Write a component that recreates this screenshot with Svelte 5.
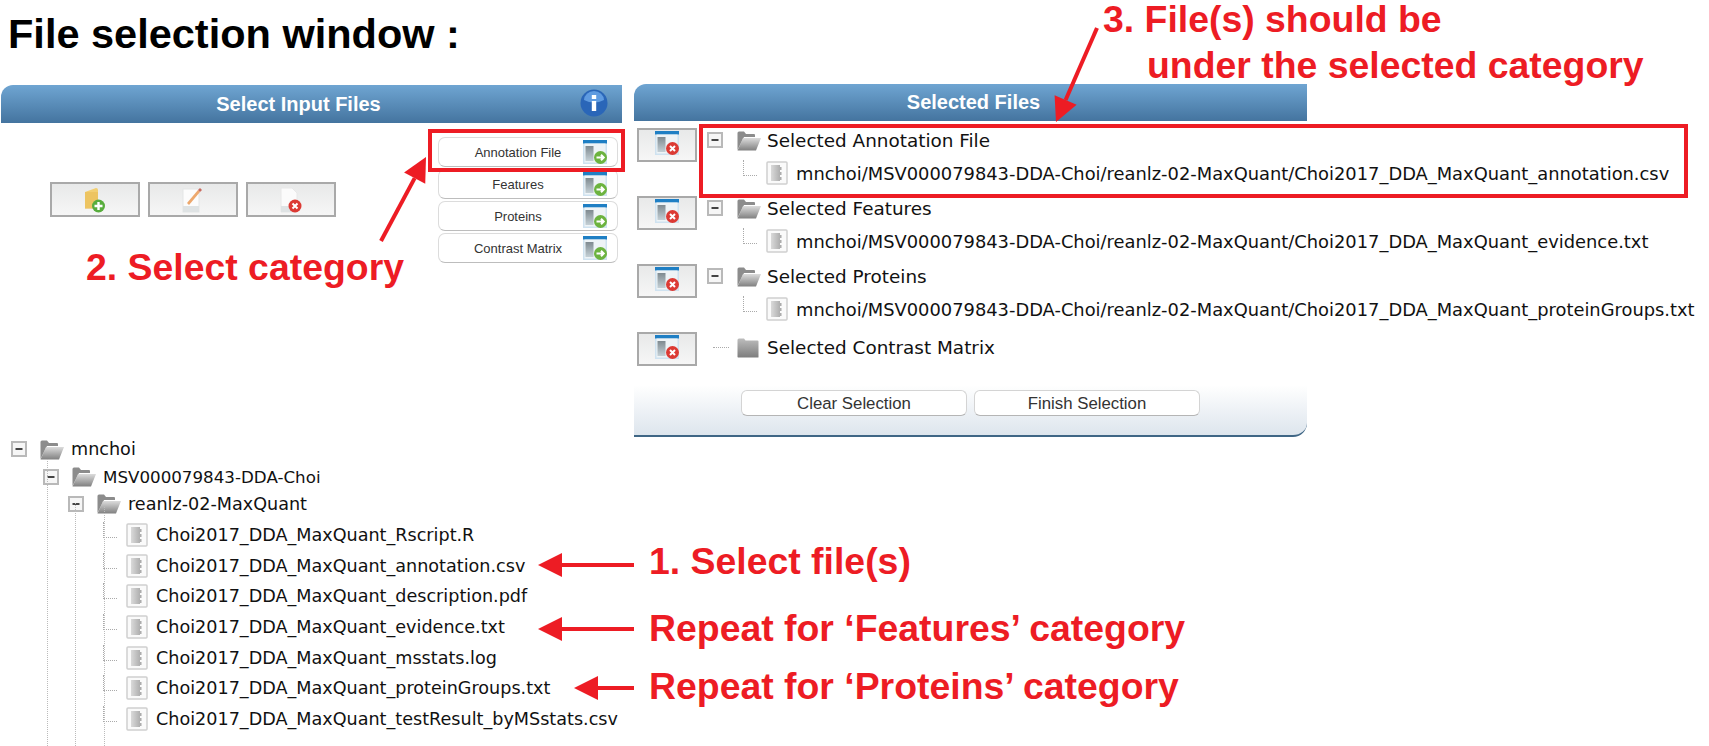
<script lang="ts">
  const categories = ['Annotation File', 'Features', 'Proteins', 'Contrast Matrix'];

  const base = 'mnchoi/MSV000079843-DDA-Choi/reanlz-02-MaxQuant/';
  const selected = [
    { label: 'Selected Annotation File', file: base + 'Choi2017_DDA_MaxQuant_annotation.csv' },
    { label: 'Selected Features', file: base + 'Choi2017_DDA_MaxQuant_evidence.txt' },
    { label: 'Selected Proteins', file: base + 'Choi2017_DDA_MaxQuant_proteinGroups.txt' },
    { label: 'Selected Contrast Matrix', file: null }
  ];

  const files = [
    'Choi2017_DDA_MaxQuant_Rscript.R',
    'Choi2017_DDA_MaxQuant_annotation.csv',
    'Choi2017_DDA_MaxQuant_description.pdf',
    'Choi2017_DDA_MaxQuant_evidence.txt',
    'Choi2017_DDA_MaxQuant_msstats.log',
    'Choi2017_DDA_MaxQuant_proteinGroups.txt',
    'Choi2017_DDA_MaxQuant_testResult_byMSstats.csv'
  ];

  // annotation arrows: from (x1,y1) to the tip (x2,y2)
  const arrows = [
    [634, 565, 538, 565],
    [634, 629, 538, 629],
    [634, 688, 574, 688],
    [381, 241, 426, 157],
    [1097, 28, 1056, 122]
  ].map(([x1, y1, x2, y2]) => {
    const len = Math.hypot(x2 - x1, y2 - y1);
    const ux = (x2 - x1) / len;
    const uy = (y2 - y1) / len;
    const hl = 24;
    const hw = 12;
    const bx = x2 - ux * hl;
    const by = y2 - uy * hl;
    return {
      x1, y1,
      x2: bx, y2: by,
      head: `${x2},${y2} ${bx - uy * hw},${by + ux * hw} ${bx + uy * hw},${by - ux * hw}`
    };
  });
</script>

{#snippet minus()}
  <svg class="minus" width="16" height="16" viewBox="0 0 16 16">
    <rect x="1" y="1" width="14" height="14" fill="#f6f6f6" stroke="#b9b9b9" stroke-width="2" />
    <rect x="4.5" y="7" width="7" height="2" fill="#444" />
  </svg>
{/snippet}

{#snippet folderOpen()}
  <svg class="folder" width="24" height="21" viewBox="0 0 24 21">
    <path d="M0.5 20V3q0-1.500 1.500-1.500h5l2 2.500h8q1 0 1 1v2H7z" fill="#8c8c8c" />
    <path d="M6 8h18l-5 12.500H0.500z" fill="url(#gFolder)" />
  </svg>
{/snippet}

{#snippet folderClosed()}
  <svg class="folder" width="22" height="21" viewBox="0 0 22 21">
    <path d="M0.500 20V3q0-1.500 1.500-1.500h5l1.500 2h12q1 0 1 1V20q0 .5-.5.5H1z" fill="url(#gFolderC)" />
  </svg>
{/snippet}

{#snippet fileIcon()}
  <svg class="file" width="22" height="24" viewBox="0 0 22 24">
    <rect x="1" y="1" width="20" height="22" rx="1" fill="#fafafa" stroke="#cfcfcf" stroke-width="1.500" />
    <path d="M5 4h9v2h1.500v3H14v2h1.500v3H14v2h1.500v3H14v1H5z" fill="url(#gFile)" />
  </svg>
{/snippet}

{#snippet windowIcon(kind)}
  <svg class="win" width="24" height="24" viewBox="0 0 24 24">
    <rect x="0" y="0" width="24" height="24" fill="#cfe2f0" />
    <rect x="0" y="0" width="24" height="3.500" fill="#1f7fc4" />
    <rect x="1.500" y="3.500" width="21" height="19" fill="#eef3f6" />
    <rect x="2.500" y="6" width="8" height="15" fill="url(#gWin)" />
    {#if kind === 'add'}
      <circle cx="17.500" cy="17.500" r="6.500" fill="#6cb33f" />
      <path d="M13.500 17.500h7M18 14.800l2.700 2.700-2.700 2.700" fill="none" stroke="#fff" stroke-width="2" />
    {:else}
      <circle cx="17.500" cy="17.500" r="6.500" fill="#dc3a34" />
      <path d="M15 15l5 5M20 15l-5 5" fill="none" stroke="#fff" stroke-width="2" />
    {/if}
  </svg>
{/snippet}

{#snippet elbow()}
  <span class="elbow"></span>
{/snippet}

<svg class="defs" width="0" height="0" aria-hidden="true">
  <defs>
    <linearGradient id="gFolder" x1="0" y1="0" x2="0" y2="1">
      <stop offset="0" stop-color="#dcdcdc" />
      <stop offset="1" stop-color="#808080" />
    </linearGradient>
    <linearGradient id="gFolderC" x1="0" y1="0" x2="0" y2="1">
      <stop offset="0" stop-color="#bdbdbd" />
      <stop offset="1" stop-color="#7d7d7d" />
    </linearGradient>
    <linearGradient id="gFile" x1="0" y1="0" x2="1" y2="0">
      <stop offset="0" stop-color="#dadada" />
      <stop offset="1" stop-color="#a8a8a8" />
    </linearGradient>
    <linearGradient id="gWin" x1="0" y1="0" x2="0" y2="1">
      <stop offset="0" stop-color="#7f8a90" />
      <stop offset="1" stop-color="#c4d0d6" />
    </linearGradient>
  </defs>
</svg>

<div class="page">
  <h1>File selection window :</h1>

  <div class="panels">
    <section class="input-panel">
      <div class="peek">MSV000079843</div>
      <header class="bar input-bar">
        <span>Select Input Files</span>
        <svg class="info" width="28" height="28" viewBox="0 0 28 28">
          <circle cx="14" cy="14" r="13.500" fill="#2a66b8" />
          <path d="M4 11a10 9 0 0 1 20 0q-10 5-20 0z" fill="#5f9be0" />
          <rect x="11.800" y="12" width="4.400" height="10" fill="#fff" />
          <rect x="11.800" y="6" width="4.400" height="4" fill="#fff" />
        </svg>
      </header>
      <div class="input-body">
        <div class="tools">
          <button aria-label="New folder">
            <svg width="22" height="26" viewBox="0 0 22 26">
              <path d="M1 5l11-4q2 0 2 2v18H1z" fill="#f2cf72" />
              <path d="M1 5h13v17H1z" fill="#e9bd56" opacity=".6" />
              <circle cx="14.500" cy="19" r="6.500" fill="#58ad3d" />
              <path d="M14.500 15v8M10.500 19h8" stroke="#fff" stroke-width="2.400" />
            </svg>
          </button>
          <button aria-label="Rename">
            <svg width="22" height="28" viewBox="0 0 22 28">
              <rect x="1" y="3" width="16" height="23" fill="#fcfcfc" stroke="#e4e6e6" />
              <rect x="1" y="20" width="16" height="6" fill="#dfe3e4" />
              <path d="M5 17L16 4l2 2L7 19z" fill="#eda86d" />
              <path d="M16 4l2-2 2 2-2 2z" fill="#c96a5f" />
            </svg>
          </button>
          <button aria-label="Delete">
            <svg width="22" height="28" viewBox="0 0 22 28">
              <path d="M1 2h11l5 5v19H1z" fill="#fbfbfb" stroke="#e8e8e8" />
              <rect x="1" y="20" width="14" height="6" fill="#dfe3e4" />
              <circle cx="15" cy="20" r="6.500" fill="#dc3a34" />
              <path d="M12.500 17.500l5 5M17.500 17.500l-5 5" stroke="#fff" stroke-width="2" />
            </svg>
          </button>
        </div>
        <div class="cats">
          {#each categories as cat}
            <button class="cat">
              <span>{cat}</span>
              {@render windowIcon('add')}
            </button>
          {/each}
        </div>
      </div>
    </section>

    <section class="selected-panel">
      <header class="bar selected-bar"><span>Selected Files</span></header>
      <div class="selected-body">
        {#each selected as group}
          <div class="group">
            <button class="remove" aria-label="Remove">{@render windowIcon('del')}</button>
            <div class="group-tree" class:empty={!group.file}>
              <div class="row">
                {#if group.file}
                  {@render minus()}
                  {@render folderOpen()}
                {:else}
                  <span class="dash"></span>
                  {@render folderClosed()}
                {/if}
                <span class="label">{group.label}</span>
              </div>
              {#if group.file}
                <div class="row child">
                  {@render elbow()}
                  {@render fileIcon()}
                  <span>{group.file}</span>
                </div>
              {/if}
            </div>
          </div>
        {/each}
      </div>
      <footer class="actions">
        <button>Clear Selection</button>
        <button>Finish Selection</button>
      </footer>
    </section>
  </div>

  <div class="browser">
    <span class="guide g1"></span>
    <span class="guide g2"></span>
    <span class="guide g3"></span>
    <div class="node lvl0">{@render minus()}{@render folderOpen()}<span>mnchoi</span></div>
    <div class="node lvl1">{@render minus()}{@render folderOpen()}<span>MSV000079843-DDA-Choi</span></div>
    <div class="node lvl2">{@render minus()}{@render folderOpen()}<span>reanlz-02-MaxQuant</span></div>
    <ul>
      {#each files as f}
        <li>{@render elbow()}{@render fileIcon()}<span>{f}</span></li>
      {/each}
    </ul>
  </div>

  <!-- annotations drawn over the screenshot -->
  <svg class="marks" width="1709" height="746" viewBox="0 0 1709 746">
    <rect x="430" y="131" width="193" height="39" fill="none" stroke="#ed1c24" stroke-width="4" />
    <rect x="701" y="126" width="985" height="70" fill="none" stroke="#ed1c24" stroke-width="4" />
    {#each arrows as a}
      <line x1={a.x1} y1={a.y1} x2={a.x2} y2={a.y2} stroke="#ed1c24" stroke-width="4" />
      <polygon points={a.head} fill="#ed1c24" />
    {/each}
  </svg>
  <div class="note n3a">3. File(s) should be</div>
  <div class="note n3b">under the selected category</div>
  <div class="note n2">2. Select category</div>
  <div class="note n1">1. Select file(s)</div>
  <div class="note nf">Repeat for ‘Features’ category</div>
  <div class="note np">Repeat for ‘Proteins’ category</div>
</div>

<style>
  :global(body) {
    margin: 0;
    background: #fff;
  }

  .defs {
    position: absolute;
  }

  .page {
    position: relative;
    width: 1709px;
    height: 746px;
    overflow: hidden;
    background: #fff;
    font-family: "DejaVu Sans", sans-serif;
    color: #111;
  }

  h1 {
    margin: 0;
    height: 85px;
    padding-left: 8px;
    box-sizing: border-box;
    font: bold 41.500px/68px "Liberation Sans", sans-serif;
    color: #000;
  }

  .panels {
    display: grid;
    grid-template-columns: 621px 673px;
    column-gap: 12px;
    margin-left: 1px;
    height: 352px;
  }

  .input-panel {
    position: relative;
  }

  .peek {
    position: absolute;
    top: -3px;
    left: 65px;
    height: 3px;
    overflow: hidden;
    font-size: 13px;
    line-height: 16px;
  }

  .bar {
    position: relative;
    display: flex;
    align-items: center;
    justify-content: center;
    height: 38px;
    box-sizing: border-box;
    border-top-left-radius: 12px;
    background: linear-gradient(#6fa5d2, #44749f);
    color: #fff;
    font: bold 20px "Liberation Sans", sans-serif;
  }

  .input-bar {
    padding-right: 26px;
  }

  .selected-bar {
    height: 37px;
    margin-top: -1px;
    padding-left: 6px;
  }

  .info {
    position: absolute;
    right: 14px;
    top: 4px;
  }

  .input-body {
    display: flex;
    align-items: flex-start;
  }

  .tools {
    display: flex;
    gap: 8px;
    margin: 59px 0 0 49px;
  }

  .tools button,
  .remove {
    display: flex;
    align-items: center;
    justify-content: center;
    padding: 0;
    box-sizing: border-box;
    border: 2px solid #a9a9a9;
    border-radius: 0;
    background: linear-gradient(#e8e9e9, #f6f6f6);
  }

  .tools button {
    width: 90px;
    height: 35px;
  }

  .cats {
    display: flex;
    flex-direction: column;
    gap: 2px;
    margin: 14px 4px 0 auto;
  }

  .cat {
    display: flex;
    align-items: center;
    box-sizing: border-box;
    width: 180px;
    height: 30px;
    padding: 0 10px 0 0;
    border: 1px solid #dcdcdc;
    border-bottom-color: #bdbdbd;
    border-radius: 7px;
    background: #fff;
    color: #333;
    font: 13px "Liberation Sans", sans-serif;
  }

  .cat span {
    flex: 1;
    text-align: center;
    padding-left: 14px;
  }

  .selected-body {
    height: 264px;
    box-sizing: border-box;
    padding: 7px 0 0 3px;
  }

  .group {
    display: flex;
    height: 68px;
  }

  .remove {
    flex: none;
    width: 60px;
    height: 34px;
    align-items: flex-start;
    padding-top: 1px;
  }

  .group-tree {
    margin-left: 10px;
    white-space: nowrap;
    font-size: 17.870px;
  }

  .group-tree.empty {
    margin-top: 3px;
  }

  .label {
    font-size: 18.400px;
  }

  .row {
    display: flex;
    align-items: center;
    height: 24px;
    margin-bottom: 9px;
  }

  .row.child {
    height: 24px;
    padding-left: 59px;
  }

  .minus {
    flex: none;
  }

  .folder {
    flex: none;
    margin: 0 6px 0 14px;
  }

  .dash {
    width: 16px;
    border-top: 1px dotted #aaa;
    margin-left: 6px;
    margin-right: -6px;
  }

  .empty .folder {
    margin-right: 8px;
  }

  .file {
    flex: none;
    margin: 0 8px 0 0;
  }

  .elbow {
    flex: none;
    width: 14px;
    height: 16px;
    margin: -10px 9px 0 -23px;
    box-sizing: border-box;
    border-left: 1px dotted #aaa;
    border-bottom: 1px dotted #aaa;
  }

  .actions {
    display: flex;
    gap: 7px;
    box-sizing: border-box;
    height: 52px;
    padding: 5px 0 0 107px;
    border-bottom: 2px solid #3f6685;
    border-bottom-right-radius: 14px;
    background: linear-gradient(#fff, #dde5ed);
  }

  .actions button {
    width: 226px;
    height: 26px;
    padding: 1px 0 0;
    border: 1px solid #d4d4d4;
    border-bottom-color: #b5b5b5;
    border-radius: 6px;
    background: #fff;
    color: #333;
    font: 16.800px "Liberation Sans", sans-serif;
  }

  .browser {
    position: relative;
    margin-top: -2px;
    font-size: 17.600px;
    white-space: nowrap;
  }

  .guide {
    position: absolute;
    border-left: 1px dotted #bbb;
    bottom: -40px;
  }

  .g1 {
    left: 47px;
    top: 24px;
  }

  .g2 {
    left: 75px;
    top: 68px;
  }

  .g3 {
    left: 104px;
    top: 70px;
  }

  .node {
    display: flex;
    align-items: center;
    height: 27px;
  }

  .lvl0 {
    padding-left: 11px;
    height: 28px;
  }

  .lvl1 {
    padding-left: 43px;
    font-size: 16.700px;
  }

  .lvl2 {
    padding-left: 68px;
  }

  .node .folder {
    margin: 0 7px 0 13px;
  }

  ul {
    list-style: none;
    margin: 3px 0 0;
    padding: 0 0 0 126px;
  }

  li {
    display: flex;
    align-items: center;
    height: 30.600px;
  }

  .marks {
    position: absolute;
    left: 0;
    top: 0;
    pointer-events: none;
  }

  .note {
    position: absolute;
    white-space: nowrap;
    color: #ed1c24;
    font: bold 37.400px/40px "Liberation Sans", sans-serif;
  }

  .n3a { left: 1103px; top: 0; line-height: 38px; }
  .n3b { left: 1147px; top: 45px; }
  .n2 { left: 86px; top: 247px; }
  .n1 { left: 649px; top: 541px; }
  .nf { left: 649px; top: 608px; }
  .np { left: 649px; top: 666px; }
</style>
